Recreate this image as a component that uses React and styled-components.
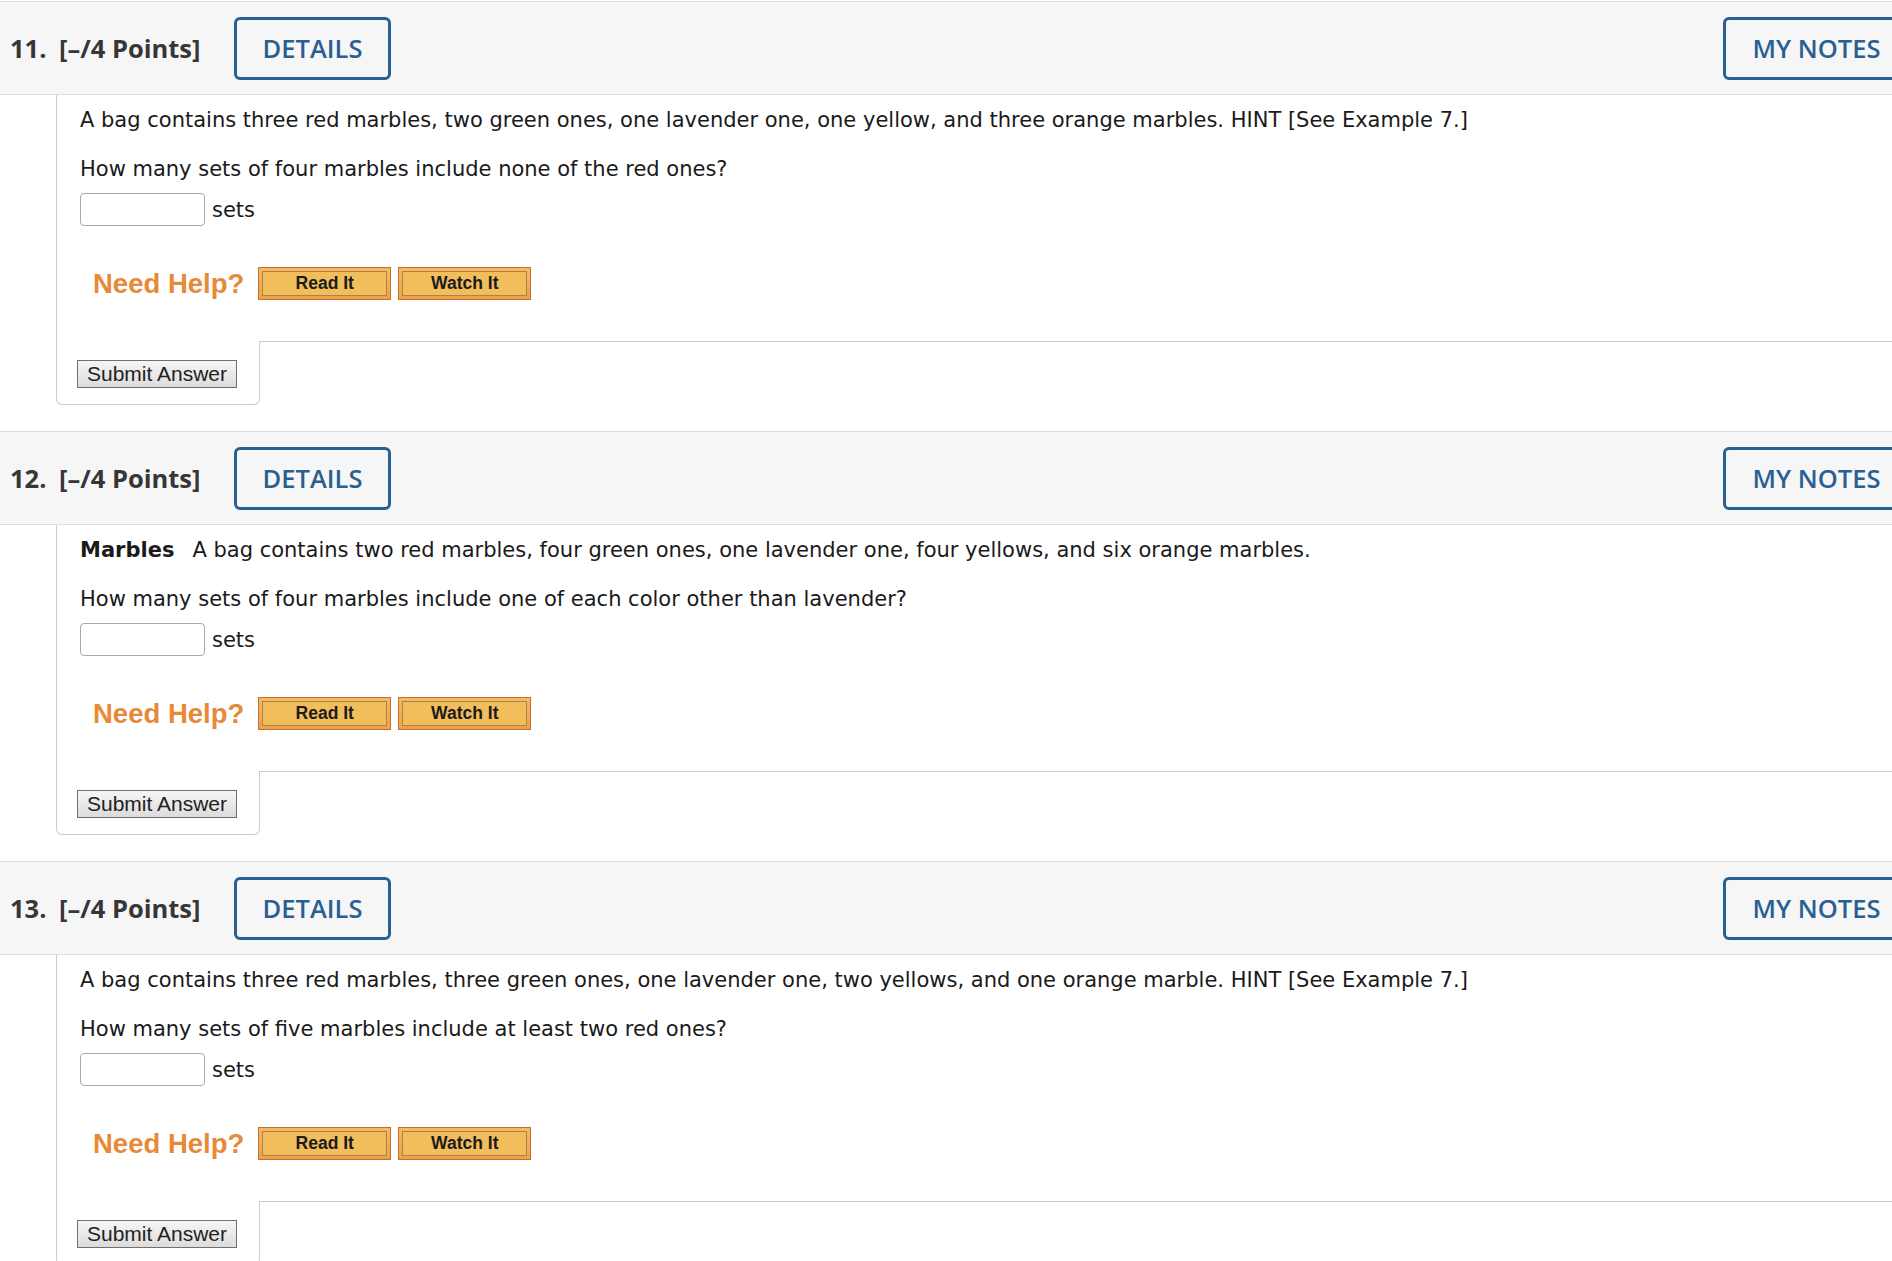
import React from "react";
import styled, { createGlobalStyle } from "styled-components";

const GlobalStyle = createGlobalStyle`
  html, body {
    margin: 0;
    padding: 0;
    background: #fff;
    overflow-x: hidden;
  }
  body {
    font-family: "DejaVu Sans", Verdana, sans-serif;
    color: #1a1a1a;
  }
`;

const questions = [
  {
    num: 11,
    text: "A bag contains three red marbles, two green ones, one lavender one, one yellow, and three orange marbles. HINT [See Example 7.]",
    ask: "How many sets of four marbles include none of the red ones?",
  },
  {
    num: 12,
    title: "Marbles",
    text: "A bag contains two red marbles, four green ones, one lavender one, four yellows, and six orange marbles.",
    ask: "How many sets of four marbles include one of each color other than lavender?",
  },
  {
    num: 13,
    text: "A bag contains three red marbles, three green ones, one lavender one, two yellows, and one orange marble. HINT [See Example 7.]",
    ask: "How many sets of five marbles include at least two red ones?",
  },
];

const Question = ({ q }) => (
  <Section>
    <Header>
      <Num>{q.num}.</Num>
      <Points>[–/4 Points]</Points>
      <OutlineButton>DETAILS</OutlineButton>
      <OutlineButton $right>MY NOTES</OutlineButton>
    </Header>
    <Body>
      <Content>
        <Line>
          {q.title && <Title>{q.title}</Title>}
          {q.text}
        </Line>
        <Line $gap>{q.ask}</Line>
        <AnswerRow>
          <AnswerInput type="text" />
          <Unit>sets</Unit>
        </AnswerRow>
        <HelpRow>
          <NeedHelp>Need Help?</NeedHelp>
          <HelpButton>
            <HelpInner>Read It</HelpInner>
          </HelpButton>
          <HelpButton>
            <HelpInner>Watch It</HelpInner>
          </HelpButton>
        </HelpRow>
      </Content>
      <SubmitRow>
        <SubmitCell>
          <SubmitButton>Submit Answer</SubmitButton>
        </SubmitCell>
        <Filler />
      </SubmitRow>
    </Body>
  </Section>
);

const App = () => {
  return (
    <>
      <GlobalStyle />
      <Page>
        {questions.map((q) => (
          <Question key={q.num} q={q} />
        ))}
      </Page>
    </>
  );
};

const Page = styled.div`
  padding-top: 1px;
`;

const Section = styled.section`
  margin-bottom: 26px;
`;

const Header = styled.div`
  display: flex;
  align-items: center;
  height: 92px;
  background: #f6f6f6;
  border-top: 1px solid #dedede;
  border-bottom: 1px solid #dedede;
  font-family: "Open Sans", "Noto Sans", sans-serif;
`;

const Num = styled.span`
  width: 49px;
  padding-left: 10px;
  font-size: 25.5px;
  font-weight: 700;
  color: #363636;
`;

const Points = styled.span`
  width: 175px;
  font-size: 25.5px;
  font-weight: 700;
  color: #363636;
`;

const OutlineButton = styled.div`
  box-sizing: border-box;
  display: flex;
  align-items: center;
  justify-content: center;
  width: ${(p) => (p.$right ? "187px" : "157px")};
  height: 63px;
  margin-left: ${(p) => (p.$right ? "auto" : "0")};
  margin-right: ${(p) => (p.$right ? "-18px" : "0")};
  border: 3px solid #2a5f92;
  border-radius: 6px;
  color: #2a5f92;
  font-size: 25.5px;
  font-weight: 600;
`;

const Body = styled.div`
  margin-left: 56px;
`;

const Content = styled.div`
  border-left: 1px solid #cccccc;
  padding: 12px 0 41px 23px;
`;

const Line = styled.p`
  margin: ${(p) => (p.$gap ? "23px 0 0" : "0")};
  font-size: 21px;
  line-height: 26px;
  white-space: nowrap;
`;

const Title = styled.b`
  margin-right: 18px;
`;

const AnswerRow = styled.div`
  display: flex;
  align-items: center;
  margin-top: 11px;
`;

const AnswerInput = styled.input`
  box-sizing: border-box;
  width: 125px;
  height: 33px;
  margin: 0;
  border: 1px solid #a9a9a9;
  border-radius: 4px;
  background: #fff;
`;

const Unit = styled.span`
  margin-left: 7px;
  font-size: 21px;
`;

const HelpRow = styled.div`
  display: flex;
  align-items: center;
  gap: 7px;
  margin-top: 41px;
  padding-left: 13px;
`;

const NeedHelp = styled.span`
  margin-right: 7px;
  font-family: "Liberation Sans", Arial, sans-serif;
  font-size: 27.5px;
  font-weight: 700;
  color: #e68a37;
`;

const HelpButton = styled.div`
  box-sizing: border-box;
  width: 133px;
  height: 33px;
  padding: 3px;
  border: 1px solid #c0732c;
  background: linear-gradient(#f8b866, #eea04a);
`;

const HelpInner = styled.div`
  box-sizing: border-box;
  display: flex;
  align-items: center;
  justify-content: center;
  height: 100%;
  border: 1px solid #a98446;
  background: #f2bd5b;
  font-family: "Liberation Sans", Arial, sans-serif;
  font-size: 17.5px;
  font-weight: 700;
  color: #1b1b1b;
`;

const SubmitRow = styled.div`
  display: flex;
`;

const SubmitCell = styled.div`
  box-sizing: border-box;
  width: 204px;
  padding: 19px 0 16px 20px;
  border: 1px solid #cccccc;
  border-top: none;
  border-radius: 0 0 6px 6px;
`;

const Filler = styled.div`
  flex: 1;
  border-top: 1px solid #cccccc;
`;

const SubmitButton = styled.button`
  box-sizing: border-box;
  width: 160px;
  height: 28px;
  padding: 0;
  border: 1px solid #707070;
  border-radius: 0;
  background: linear-gradient(#f6f6f6, #dcdcdc);
  font-family: "Liberation Sans", Arial, sans-serif;
  font-size: 21px;
  color: #222;
`;

export default App;
